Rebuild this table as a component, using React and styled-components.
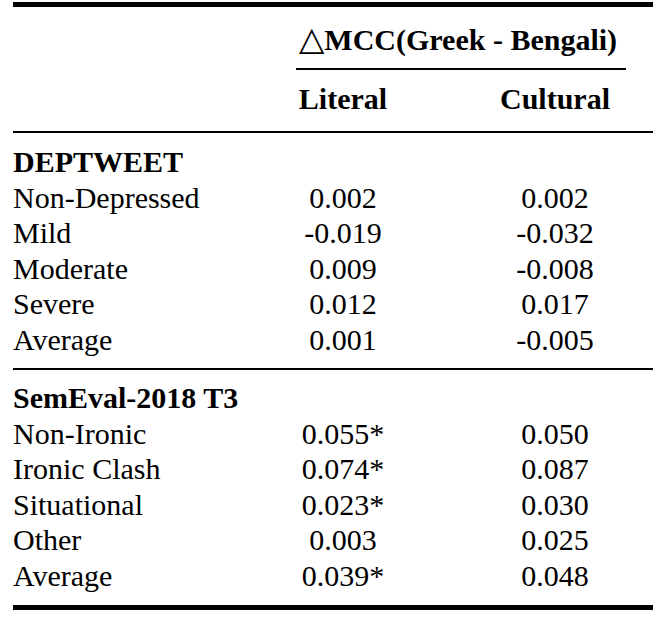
import React from 'react';
import styled, { createGlobalStyle } from 'styled-components';

const Global = createGlobalStyle`
  html, body { margin: 0; padding: 0; background: #fff; }
  body {
    font-family: "Liberation Serif", "Times New Roman", serif;
    color: #000;
  }
`;

const Page = styled.div`
  padding: 2px 0 0 13px;
`;

const Table = styled.div`
  width: 640px;
  border-top: 5px solid #000;
  border-bottom: 5px solid #000;
`;

const Block = styled.div`
  padding: ${(p) => p.$pad};
  border-top: ${(p) => (p.$ruled ? '2px solid #000' : 'none')};
`;

const Row = styled.div`
  display: grid;
  grid-template-columns: 189px 106px 142px;
  column-gap: 88px;
  padding-right: 27px;
  font-size: 30px;
  line-height: 35.5px;
  height: 35.5px;
  white-space: nowrap;
`;

const Label = styled.div`
  font-weight: ${(p) => (p.$bold ? 700 : 400)};
  grid-column: ${(p) => (p.$span ? '1 / -1' : 'auto')};
`;

const Num = styled.div`
  text-align: center;
  font-weight: ${(p) => (p.$bold ? 700 : 400)};
`;

const Spanning = styled.div`
  grid-column: 2 / 4;
  text-align: center;
  font-weight: 700;
`;

const Tri = styled.span`
  font-weight: 400;
  font-family: "DejaVu Sans", sans-serif;
  font-size: 33px;
  line-height: 0;
  margin-right: 0px;
`;

const CmidRow = styled.div`
  display: grid;
  grid-template-columns: 189px 106px 142px;
  column-gap: 88px;
  padding-right: 27px;
  margin: 10px 0 11px;
`;

const Cmid = styled.div`
  grid-column: 2 / 4;
  margin-left: 6px;
  border-top: 2px solid #000;
`;

const sections = [
  {
    title: 'DEPTWEET',
    rows: [
      ['Non-Depressed', '0.002', '0.002'],
      ['Mild', '-0.019', '-0.032'],
      ['Moderate', '0.009', '-0.008'],
      ['Severe', '0.012', '0.017'],
      ['Average', '0.001', '-0.005'],
    ],
    pad: '11px 0 11px',
  },
  {
    title: 'SemEval-2018 T3',
    rows: [
      ['Non-Ironic', '0.055*', '0.050'],
      ['Ironic Clash', '0.074*', '0.087'],
      ['Situational', '0.023*', '0.030'],
      ['Other', '0.003', '0.025'],
      ['Average', '0.039*', '0.048'],
    ],
    pad: '10px 0 12px',
  },
];

export default function App() {
  return (
    <>
      <Global />
      <Page>
        <Table>
          <Block $pad="15px 0 15px">
            <Row>
              <Label />
              <Spanning>
                <Tri>△</Tri>MCC(Greek - Bengali)
              </Spanning>
            </Row>
            <CmidRow>
              <Cmid />
            </CmidRow>
            <Row>
              <Label />
              <Num $bold>Literal</Num>
              <Num $bold>Cultural</Num>
            </Row>
          </Block>
          {sections.map((s) => (
            <Block key={s.title} $pad={s.pad} $ruled>
              <Row>
                <Label $bold $span>
                  {s.title}
                </Label>
              </Row>
              {s.rows.map(([name, a, b]) => (
                <Row key={name}>
                  <Label>{name}</Label>
                  <Num>{a}</Num>
                  <Num>{b}</Num>
                </Row>
              ))}
            </Block>
          ))}
        </Table>
      </Page>
    </>
  );
}
